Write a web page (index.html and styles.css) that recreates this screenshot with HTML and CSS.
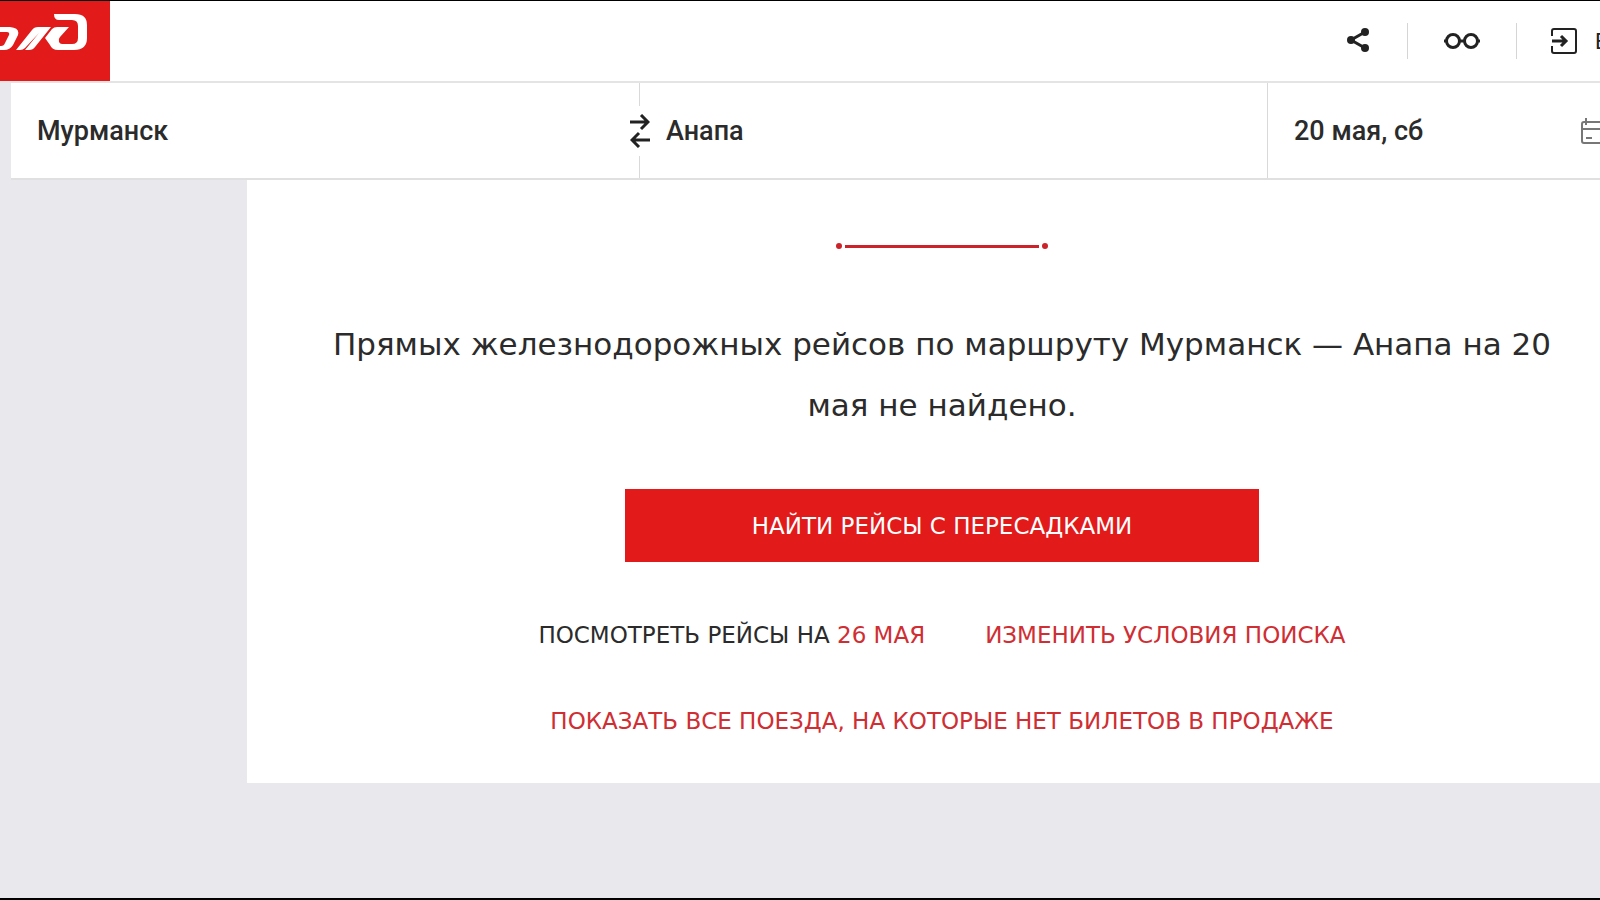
FILE: index.html
```html
<!DOCTYPE html>
<html lang="ru">

<head>
    <meta charset="UTF-8">
    <meta name="viewport" content="width=device-width, initial-scale=1.0">
    <title>РЖД - Мурманск — Анапа</title>
    <link rel="stylesheet" href="styles.css">
</head>

<body>
    <header class="header">
        <a href="#" class="logo" aria-label="РЖД">
            <svg width="110" height="80" viewBox="0 0 110 80" fill="#fff">
                <path d="M-6 26 H10 Q20 27 18 34 L13 44 Q10 49 4 49 H-6 V45 H1 Q4 45 5 42 L9 34 Q10 31 7 31 H-6 Z" />
                <path d="M16 49 L32 29 Q34 26 38 26 H51 L35 46 Q33 49 29 49 H25 L39 32 L25 47 Q23 49 20 49 Z" />
                <path d="M54 13 H75 Q87 13 87 24 V37 Q87 49 74 49 H58 Q52 49 50 44 L45 37 L52 28 Q54 26 57 26 H69 L60 36 Q58 38 59 41 Q60 43 62 43 H72 Q78 43 78 37 V25 Q78 19 72 19 H59 Q54 19 54 13 Z" />
            </svg>
        </a>
        <nav class="header-menu">
            <button type="button" class="icon-button" aria-label="Поделиться">
                <svg width="26" height="28" viewBox="0 0 26 28" fill="#222">
                    <path d="M19 5 L5 13 L19 21" fill="none" stroke="#222" stroke-width="3" />
                    <circle cx="19" cy="5" r="4" />
                    <circle cx="5" cy="13" r="4" />
                    <circle cx="19" cy="21" r="4" />
                </svg>
            </button>
            <button type="button" class="icon-button" aria-label="Версия для слабовидящих">
                <svg width="38" height="18" viewBox="0 0 38 18" fill="none" stroke="#222" stroke-width="3">
                    <circle cx="10" cy="9" r="6.5" />
                    <circle cx="28" cy="9" r="6.5" />
                    <path d="M1 9 H4 M16 9 H22 M34 9 H37" />
                </svg>
            </button>
            <a href="#" class="login">
                <svg width="26" height="26" viewBox="0 0 26 26" fill="none" stroke="#222" stroke-width="2">
                    <path d="M1 8 V3 Q1 1 3 1 H23 Q25 1 25 3 V23 Q25 25 23 25 H3 Q1 25 1 23 V18" />
                    <path d="M1 13 H15 M10 8 L15 13 L10 18" stroke-width="3" />
                </svg>
                <span>Вход</span>
            </a>
        </nav>
    </header>

    <form class="search" action="#">
        <div class="field">
            <input type="text" name="from" aria-label="Откуда" value="Мурманск">
        </div>
        <div class="field">
            <button type="button" class="swap" aria-label="Поменять местами">
                <svg width="20" height="34" viewBox="0 0 20 34" fill="none" stroke="#222" stroke-width="3">
                    <path d="M0 8 H18 M11 1 L18 8 L11 15" />
                    <path d="M20 26 H2 M9 19 L2 26 L9 33" />
                </svg>
            </button>
            <input type="text" name="to" aria-label="Куда" value="Анапа">
        </div>
        <div class="field">
            <input type="text" name="date" aria-label="Дата" value="20 мая, сб">
            <button type="button" class="calendar" aria-label="Календарь">
                <svg width="30" height="28" viewBox="0 0 30 28" fill="none" stroke="#777" stroke-width="2">
                    <path d="M30 5 H4 Q2 5 2 7 V24 Q2 26 4 26 H30 M2 12 H30 M6 1 V8 M6 21 H12" />
                </svg>
            </button>
        </div>
    </form>

    <main class="result">
        <svg class="route-line" width="212" height="8" viewBox="0 0 212 8" fill="#cc2229">
            <circle cx="3" cy="4" r="3" />
            <rect x="9" y="3" width="194" height="3" />
            <circle cx="209" cy="4" r="3" />
        </svg>
        <h1 class="message">Прямых железнодорожных рейсов по маршруту Мурманск — Анапа на 20 мая не найдено.</h1>
        <button type="button" class="transfer-button">Найти рейсы с пересадками</button>
        <div class="links">
            <span>Посмотреть рейсы на <a href="#">26 мая</a></span>
            <a href="#">Изменить условия поиска</a>
        </div>
        <div class="links">
            <a href="#">Показать все поезда, на которые нет билетов в продаже</a>
        </div>
    </main>
</body>

</html>
```
FILE: styles.css
```css
* {
    box-sizing: border-box;
}

body {
    margin: 0;
    min-height: 100vh;
    font-family: 'DejaVu Sans', sans-serif;
    color: #2b2b2b;
    background-color: #e8e8ed;
    border-top: 1px solid #000;
    border-bottom: 2px solid #000;
    overflow-x: hidden;
}

a {
    color: #cf2e33;
    text-decoration: none;
}

button {
    padding: 0;
    border: none;
    background: none;
    font-family: inherit;
    cursor: pointer;
}

svg {
    display: block;
}

.header {
    display: flex;
    justify-content: space-between;
    height: 82px;
    background-color: #fff;
    border-bottom: 2px solid #e4e4e4;
}

.logo {
    background-color: #e21a1a;
}

.header-menu {
    display: flex;
    align-items: center;
}

.icon-button {
    display: flex;
    align-items: center;
    height: 36px;
    padding: 0 35px;
    border-right: 1px solid #d5d5d5;
}

.login {
    display: flex;
    align-items: center;
    gap: 18px;
    width: 83px;
    padding-left: 34px;
    overflow: hidden;
    color: #222;
    font-family: Roboto, sans-serif;
    font-size: 22px;
}

.login svg {
    flex-shrink: 0;
}

/* Search form */
.search {
    display: grid;
    grid-template-columns: 628fr 628fr 333fr;
    height: 97px;
    margin-left: 11px;
    background-color: #fff;
    border-bottom: 2px solid #e0e0e0;
}

.field {
    position: relative;
    display: flex;
    align-items: center;
    min-width: 0;
    padding-left: 26px;
}

.field + .field {
    border-left: 1px solid #d9d9d9;
}

.field input {
    flex: 1;
    min-width: 0;
    padding: 0;
    border: none;
    outline: none;
    background: none;
    color: #2b2b2b;
    font-family: Roboto, sans-serif;
    font-size: 27px;
    font-weight: 500;
}

.swap {
    position: absolute;
    left: -10px;
    padding: 8px 0;
    background-color: #fff;
}

.calendar {
    width: 20px;
    overflow: hidden;
}

/* Search result */
.result {
    display: flex;
    flex-direction: column;
    align-items: center;
    margin-left: 247px;
    padding: 62px 33px 40px 70px;
    background-color: #fff;
}

.message {
    margin: 64px 0 53px;
    font-size: 31px;
    font-weight: 400;
    line-height: 61px;
    text-align: center;
}

.transfer-button {
    width: 634px;
    max-width: 100%;
    height: 73px;
    margin-bottom: 51px;
    background-color: #e21a1a;
    color: #fff;
    font-size: 23px;
    text-transform: uppercase;
}

.links {
    display: flex;
    flex-wrap: wrap;
    justify-content: center;
    gap: 60px;
    margin-bottom: 42px;
    font-size: 23px;
    line-height: 44px;
    text-transform: uppercase;
}

.links:last-child {
    margin-bottom: 0;
}
```
